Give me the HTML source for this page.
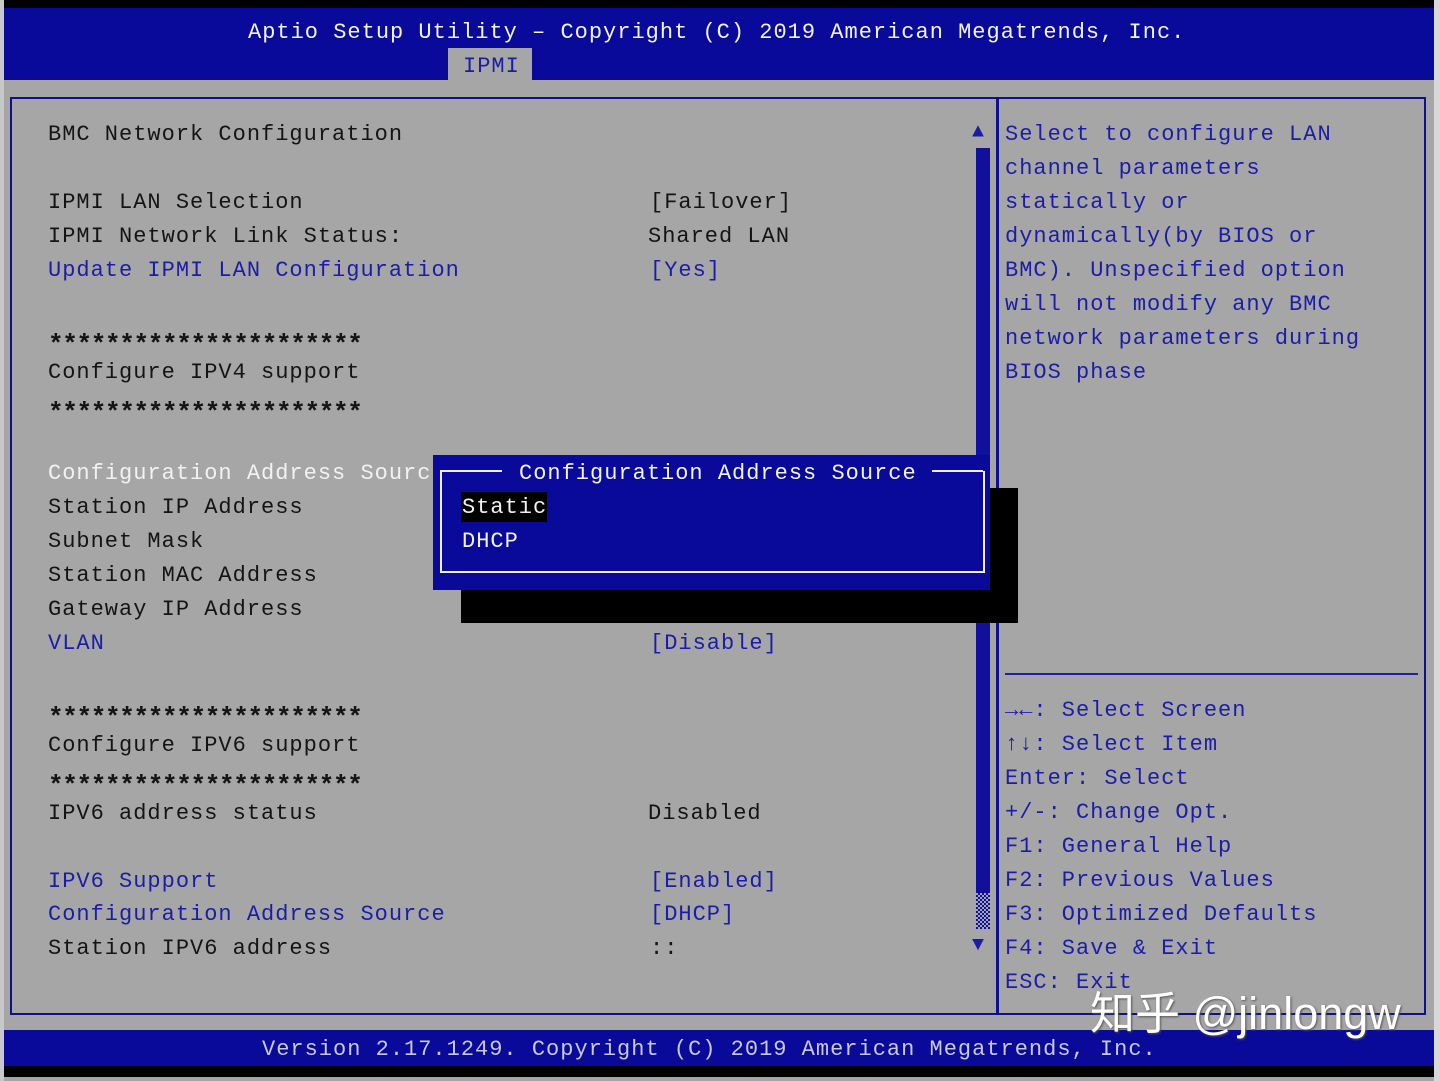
<!DOCTYPE html>
<html><head><meta charset="utf-8"><style>
*{margin:0;padding:0}
body{width:1440px;height:1081px;background:#a6a6a6;position:relative;overflow:hidden;font-family:"Liberation Mono",monospace;font-size:22px;letter-spacing:1px}
.a{position:absolute;white-space:pre;line-height:30px}
.k{color:#141414}.b{color:#1c1ca8}.w{color:#f2f2f2}
.r{position:absolute}
.s{font-size:26px;letter-spacing:-1.35px;font-weight:bold}
</style></head><body>
<div class="r" style="left:0;top:0;width:1440px;height:10px;background:#000"></div>
<div class="r" style="left:4px;top:8px;width:1430px;height:72px;background:#0a0a9a"></div>
<div class="r" style="left:1434px;top:0;width:6px;height:1081px;background:#d8d8d8"></div>
<div class="r" style="left:0;top:0;width:4px;height:1081px;background:#c8c8c8"></div>
<div class="a w" style="left:248px;top:18px">Aptio Setup Utility – Copyright (C) 2019 American Megatrends, Inc.</div>
<div class="r" style="left:448px;top:48px;width:84px;height:32px;background:#a6a6a6"></div>
<div class="a b" style="left:463px;top:52px">IPMI</div>
<div class="r" style="left:10px;top:97px;width:1412px;height:914px;border:2px solid #10108c"></div>
<div class="r" style="left:996px;top:97px;width:3px;height:918px;background:#10108c"></div>
<div class="r" style="left:1005px;top:673px;width:413px;height:2px;background:#2020a0"></div>
<div class="a b" style="left:972px;top:118px;font-size:20px">▲</div>
<div class="r" style="left:976px;top:148px;width:14px;height:745px;background:#10109a"></div>
<div class="r" style="left:976px;top:893px;width:14px;height:36px;background:repeating-conic-gradient(#10109a 0 25%,#a6a6a6 0 50%) 0 0/4px 4px"></div>
<div class="a b" style="left:972px;top:931px;font-size:20px">▼</div>
<div class="a k" style="left:48px;top:120px">BMC Network Configuration</div>
<div class="a k" style="left:48px;top:188px">IPMI LAN Selection</div>
<div class="a k" style="left:650px;top:188px">[Failover]</div>
<div class="a k" style="left:48px;top:222px">IPMI Network Link Status:</div>
<div class="a k" style="left:648px;top:222px">Shared LAN</div>
<div class="a b" style="left:48px;top:256px">Update IPMI LAN Configuration</div>
<div class="a b" style="left:650px;top:256px">[Yes]</div>
<div class="a k s" style="left:48px;top:330px">**********************</div>
<div class="a k" style="left:48px;top:358px">Configure IPV4 support</div>
<div class="a k s" style="left:48px;top:398px">**********************</div>
<div class="a w" style="left:48px;top:459px">Configuration Address Sourc</div>
<div class="a k" style="left:48px;top:493px">Station IP Address</div>
<div class="a k" style="left:48px;top:527px">Subnet Mask</div>
<div class="a k" style="left:48px;top:561px">Station MAC Address</div>
<div class="a k" style="left:48px;top:595px">Gateway IP Address</div>
<div class="a b" style="left:48px;top:629px">VLAN</div>
<div class="a b" style="left:650px;top:629px">[Disable]</div>
<div class="a k s" style="left:48px;top:703px">**********************</div>
<div class="a k" style="left:48px;top:731px">Configure IPV6 support</div>
<div class="a k s" style="left:48px;top:771px">**********************</div>
<div class="a k" style="left:48px;top:799px">IPV6 address status</div>
<div class="a k" style="left:648px;top:799px">Disabled</div>
<div class="a b" style="left:48px;top:867px">IPV6 Support</div>
<div class="a b" style="left:650px;top:867px">[Enabled]</div>
<div class="a b" style="left:48px;top:900px">Configuration Address Source</div>
<div class="a b" style="left:650px;top:900px">[DHCP]</div>
<div class="a k" style="left:48px;top:934px">Station IPV6 address</div>
<div class="a k" style="left:650px;top:934px">::</div>
<div class="r" style="left:461px;top:488px;width:557px;height:135px;background:#000"></div>
<div class="r" style="left:433px;top:455px;width:557px;height:135px;background:#0a0a9a"></div>
<div class="r" style="left:440px;top:471px;width:541px;height:100px;border:2px solid #f0f0f0;border-top:none"></div>
<div class="r" style="left:440px;top:470px;width:62px;height:2px;background:#f0f0f0"></div>
<div class="r" style="left:932px;top:470px;width:51px;height:2px;background:#f0f0f0"></div>
<div class="a w" style="left:519px;top:459px">Configuration Address Source</div>
<div class="r" style="left:461px;top:492px;width:86px;height:30px;background:#000"></div>
<div class="a w" style="left:462px;top:493px">Static</div>
<div class="a w" style="left:462px;top:527px">DHCP</div>
<div class="a b" style="left:1005px;top:118px;line-height:34px">Select to configure LAN
channel parameters
statically or
dynamically(by BIOS or
BMC). Unspecified option
will not modify any BMC
network parameters during
BIOS phase</div>
<div class="a b" style="left:1005px;top:694px;line-height:34px"><b>→←</b>: Select Screen
<b>↑↓</b>: Select Item
Enter: Select
+/-: Change Opt.
F1: General Help
F2: Previous Values
F3: Optimized Defaults
F4: Save &amp; Exit
ESC: Exit</div>
<div class="r" style="left:4px;top:1030px;width:1430px;height:36px;background:#0a0a9a"></div>
<div class="r" style="left:4px;top:1066px;width:1430px;height:11px;background:#000"></div>
<div class="a w" style="left:262px;top:1035px;color:#c8c8d8">Version 2.17.1249. Copyright (C) 2019 American Megatrends, Inc.</div>
<div class="a" style="left:1090px;top:988px;font-family:'Liberation Sans','Noto Sans CJK SC',sans-serif;font-size:45px;line-height:52px;letter-spacing:0;color:#fff;text-shadow:1px 1px 2px #555">知乎 @jinlongw</div>
</body></html>
